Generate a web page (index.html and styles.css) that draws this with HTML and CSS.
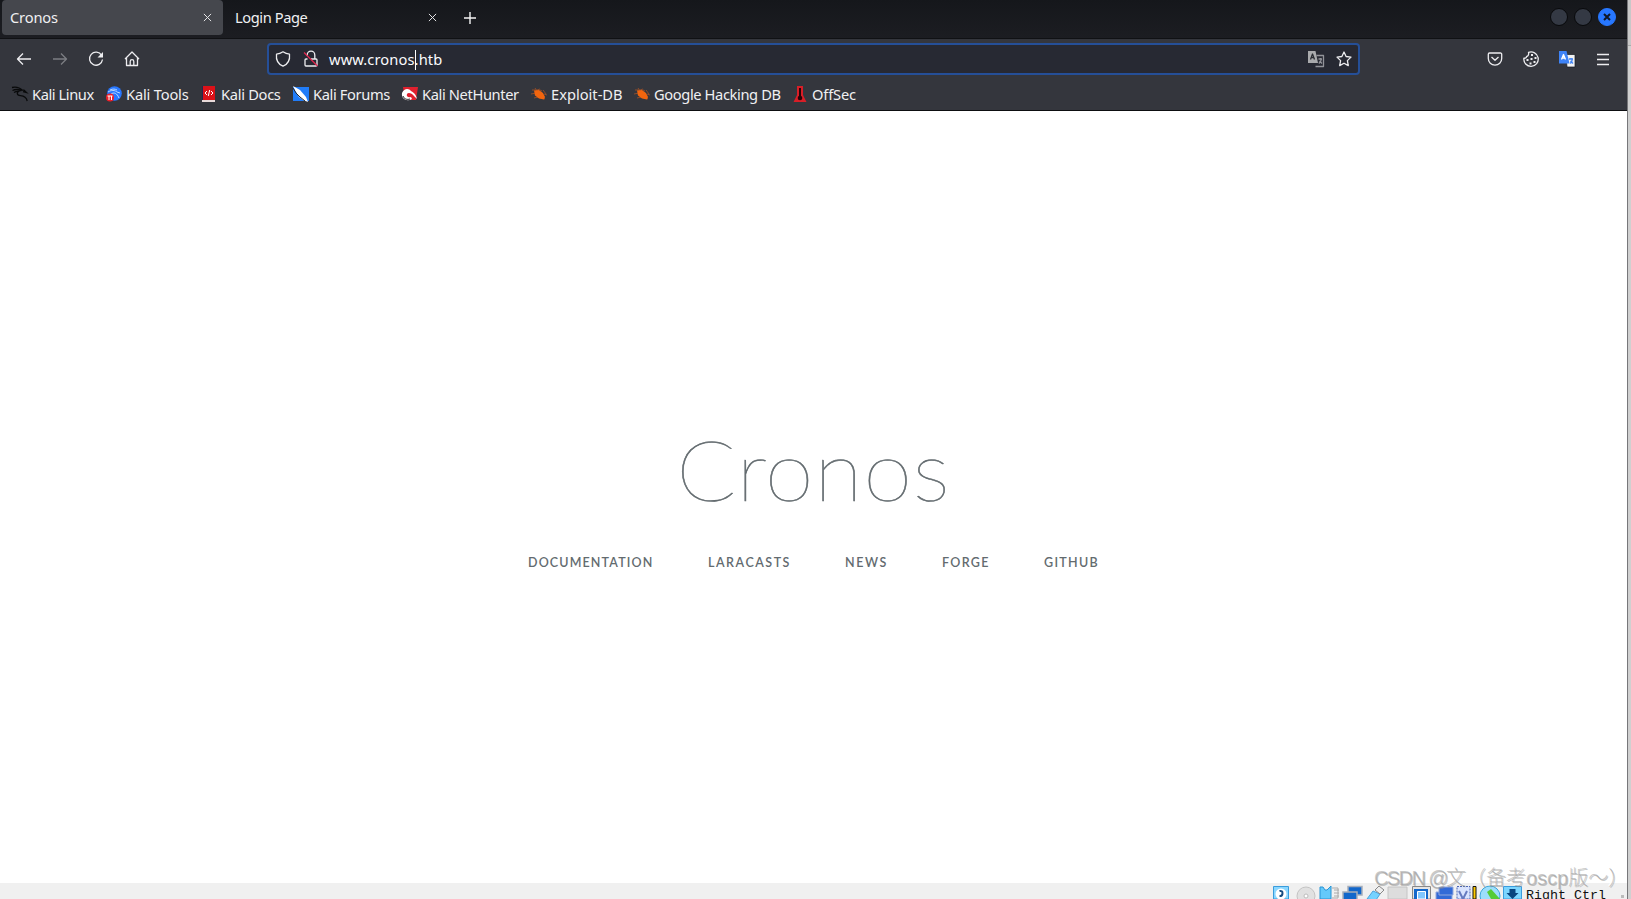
FILE: index.html
```html
<!DOCTYPE html>
<html lang="en">
<head>
<meta charset="utf-8">
<title>Cronos</title>
<link rel="stylesheet" href="styles.css">
</head>
<body>
<div class="screen">
  <div class="browser">
    <header class="tabs">
      <div class="tab active"><span>Cronos</span><svg class="x" viewBox="0 0 10 10"><path d="M1 1l8 8M9 1l-8 8"/></svg></div>
      <div class="tab second"><span>Login Page</span><svg class="x" viewBox="0 0 10 10"><path d="M1 1l8 8M9 1l-8 8"/></svg></div>
      <svg class="plus" viewBox="0 0 12 12"><path d="M6 0v12M0 6h12"/></svg>
      <div class="controls"><i></i><i></i><i class="close"><svg viewBox="0 0 8 8"><path d="M1 1l6 6M7 1l-6 6"/></svg></i></div>
    </header>
    <div class="toolbar">
      <div class="navs">
        <svg class="ic" viewBox="0 0 16 16"><path d="M15 8H1.5M7 2.5L1.5 8 7 13.500"/></svg>
        <svg class="ic dim" viewBox="0 0 16 16"><path d="M1 8h13.500M9 2.500L14.500 8 9 13.500"/></svg>
        <svg class="ic" viewBox="0 0 16 16"><path d="M13.600 4.300A6.500 6.500 0 1 0 14.500 8.500"/><path class="solid" d="M15 1v5.500H9.500z"/></svg>
        <svg class="ic" viewBox="0 0 16 16"><path d="M1 8l7-7 7 7M2.500 7v7.500h11V7M6.200 14.500v-4a1.800 1.800 0 0 1 3.600 0v4"/></svg>
      </div>
      <div class="url">
        <svg class="ic" viewBox="0 0 16 16"><path d="M8 .8C6.300 2 4 3 1.500 3.200c-.6 5.300 1.200 9.700 6.500 12 5.300-2.300 7.100-6.700 6.500-12C12 3 9.700 2 8 .8z"/></svg>
        <svg class="ic lock" viewBox="0 0 16 16"><path d="M4.200 5V4a3.800 3.800 0 0 1 7.600 0v3.500M4.500 8H3a1 1 0 0 0-1 1v5a1 1 0 0 0 1 1h10a1 1 0 0 0 1-1V9a1 1 0 0 0-1-1H8"/><path class="slash" d="M1 1.500l13.500 13.500"/></svg>
        <span class="address">www.cronos<b class="caret"></b>.htb</span>
        <svg class="ic tr" viewBox="0 0 16 16"><path class="page" d="M8.500 4.500h7v11H7.500"/><path class="card" d="M0 0h7.500L10 12H0z"/><path class="glyph" d="M2.500 8.500L4.500 3l2 5.500M3.200 6.600h2.700"/><path class="page" d="M10.500 8h3.500M12.500 7v1M13.300 8c0 2-1.300 3.500-2.500 4.500M11.500 10l2.500 2.500"/></svg>
        <svg class="ic star" viewBox="0 0 16 16"><path d="M8 1l2.100 4.500 4.900.6-3.600 3.500.9 5L8 12.200l-4.300 2.400.9-5L1 6.100l4.900-.6z"/></svg>
      </div>
      <div class="tools">
        <svg class="ic" viewBox="0 0 16 16"><path d="M2.500 2h11a1.200 1.200 0 0 1 1.200 1.200V7.500a6.700 6.700 0 0 1-13.400 0V3.200A1.200 1.200 0 0 1 2.500 2zM4.500 6L8 9.300 11.500 6"/></svg>
        <svg class="ic" viewBox="0 0 16 16"><path d="M5.500 1.400A7.200 7.200 0 1 1 .9 7.200c1.300.3 2.500-.4 2.800-1.700C5.300 5.200 6 3.300 5.500 1.400z"/><path class="solid" d="M8 3h2v2H8zM11.500 6h2v2h-2zM7.500 7h2v2h-2zM3.500 8h2v2h-2zM10.500 10h2v2h-2zM6.500 11.500h2v2h-2z"/></svg>
        <svg class="ic tr blue" viewBox="0 0 16 16"><path class="paper" d="M7 3.500h9V16H8z"/><path class="card" d="M0 0h7.500l3 12.500H0z"/><path class="glyph" d="M2.500 8.500L4.500 3.500l2 5M3.200 7h2.700"/><path class="page" d="M10 8h4M12 7v1M13.300 8c0 2-1 3.500-2 4.500M11.500 10l2.500 2.500"/></svg>
        <svg class="ic" viewBox="0 0 16 16"><path d="M2 3.500h12M2 8.500h12M2 13.500h12"/></svg>
      </div>
    </div>
    <nav class="bookmarks">
      <a class="b1"><svg viewBox="0 0 16 16"><path class="dragon" d="M0 1.500c4-.8 8 .3 10.500 3M.5 4.500c3-1.500 6-1.300 9 .2M2 6.500c1.500-1 3-1.300 4.500-1.200M9 4l3 .2 2.500 2.300-3.500-.8M8.500 4.500C4 6 4.500 9.500 8.500 9.700c4 .3 6 1.800 6.700 5.300"/></svg><span>Kali Linux</span></a>
      <a class="b2"><svg viewBox="0 0 16 16"><circle cx="8.500" cy="7.500" r="7.300" fill="#2777ff"/><path d="M2 6c3-2 7-2 9 0l3 1M5 8c3-2 6-1 8 4M4 4c3-1.500 5-1 7 0" stroke="#b9d8ff" fill="none"/><circle cx="4" cy="11.500" r="4" fill="#ed2028"/><path d="M1.500 10h5M3 10v4M5.500 10v4" stroke="#fff" fill="none"/></svg><span>Kali Tools</span></a>
      <a class="b3"><svg viewBox="0 0 16 16"><path d="M1 0h2v14H1z" fill="#2a2450"/><path d="M2 0h12v14H2z" fill="#dc1118"/><path d="M1 14h13v2H1z" fill="#e8dada"/><path d="M6 5L4 7l2 2M10 5l2 2-2 2M8.700 4L7.300 10" stroke="#fff" fill="none"/></svg><span>Kali Docs</span></a>
      <a class="b4"><svg viewBox="0 0 16 16"><path d="M0 1h16v14H0z" fill="#207cf8"/><path d="M0 0l7 4 6 7 2 5-5-2-4-3-3-5z" fill="#fff"/><path d="M0 2l3 5 4 4 5 4" stroke="#26272b" stroke-width="1" fill="none"/></svg><span>Kali Forums</span></a>
      <a class="b5"><svg viewBox="0 0 16 16"><path d="M1 1h15l-2 13H3z" fill="#e0202e"/><path d="M0 7c2-5 7-5 9-2 2 1 5 3 6 8l-3-3c-2-3-6-4-7-2s1 4 4 3l1 2c-5 3-11 0-10-6z" fill="#fff"/><path d="M1 10c1 3 4 4 7 3" stroke="#222" fill="none"/></svg><span>Kali NetHunter</span></a>
      <a class="b6"><svg viewBox="0 0 16 16"><path d="M1 4l5 0 3-1M0 8l5-1M3 12l4-1M9 4l2 1M13 8l3 1M12 12l2 1M4 2l2 3M12 4l3 4" stroke="#8e4c2b" fill="none"/><path d="M3 4.500l5-.5 4 3 2 4-1 2.500-5-1-4-3z" fill="#f2650e"/></svg><span>Exploit-DB</span></a>
      <a class="b7"><svg viewBox="0 0 16 16"><path d="M1 4l5 0 3-1M0 8l5-1M3 12l4-1M9 4l2 1M13 8l3 1M12 12l2 1M4 2l2 3M12 4l3 4" stroke="#8e4c2b" fill="none"/><path d="M3 4.500l5-.5 4 3 2 4-1 2.500-5-1-4-3z" fill="#f2650e"/></svg><span>Google Hacking DB</span></a>
      <a class="b8"><svg viewBox="0 0 16 16"><path d="M5 0h6v9l3.500 7h-13L5 9z" fill="#d81e27"/><path d="M8 2v8" stroke="#260609" stroke-width="2"/><circle cx="8" cy="12" r="2.300" fill="#260609"/></svg><span>OffSec</span></a>
    </nav>
    <main class="page-body">
      <h1>Cronos</h1>
      <div class="links"><a class="l1">Documentation</a><a class="l2">Laracasts</a><a class="l3">News</a><a class="l4">Forge</a><a class="l5">GitHub</a></div>
    </main>
    <footer class="status">
      <svg class="devices" viewBox="0 0 250 16">
        <g><path d="M1.500 3.500h15V16h-15z" fill="#8bd7ff" stroke="#3b9ddd"/><circle cx="9" cy="11" r="5.500" fill="#fff"/><path d="M7.500 8c4-1 4 5 0 5" stroke="#174c80" fill="none" stroke-width="2"/></g>
        <g><circle cx="34" cy="13" r="9" fill="#e1e1e1" stroke="#c4c4c4"/><circle cx="34" cy="13" r="2" fill="#fff" stroke="#bbb"/></g>
        <g><path d="M60 5h6v10h-6M62 7h5M62 10h5M62 13h5" stroke="#aaa" fill="none" stroke-width="1"/><path d="M48 4h3l2 3h2l4-4v13H48z" fill="#64c9fa" stroke="#2994d5"/></g>
        <g stroke="#a6aebb" stroke-width="1.500"><path d="M76 3.500h14V12H76z" fill="#1267cb"/><path d="M71 9h14v8H71z" fill="#1267cb"/></g>
        <g><path d="M95 16l6-8 7 3-4 6z" fill="#75d2ff" stroke="#4aa2dd"/><path d="M103 7l4-4 5 4-4 4z" fill="#eee" stroke="#888"/></g>
        <path d="M116 4h19v12h-19z" fill="#ddd" stroke="#c4c4c4"/>
        <g><path d="M140.500 3.500h18V16h-18z" fill="#e4e4e4" stroke="#888"/><path d="M142 6h14v10h-14z" fill="#1267cb"/><path d="M145.500 8.500h8V16h-8z" fill="#80c6ff" stroke="#fff"/></g>
        <g fill="#326ad7" stroke="#91a8de"><path d="M164 9h16v8h-16z"/><path d="M167 4h14v8h-14z"/></g>
        <g><path d="M185 3.500h13V16h-13z" fill="#d9e4ff" stroke="#4b65b4" stroke-dasharray="2 1"/><path d="M187 8l4 8 4-8" fill="none" stroke="#657ac0" stroke-width="2"/><path d="M201 3.500h3V16h-3z" fill="#ffcb00" stroke="#111"/></g>
        <g><circle cx="218" cy="13" r="10" fill="#9cdefc" stroke="#3aa6de"/><path d="M215 9l4-3 9 10h-9z" fill="#55cc35"/></g>
        <g><path d="M231.500 3.500h18V16h-18z" fill="#7cd5ff" stroke="#3b9ddd"/><path d="M237.500 6h6v4h3l-6 6-6-6h3z" fill="#07447f"/></g>
      </svg>
      <span class="host">Right Ctrl</span><i class="grip"></i>
    </footer>
  </div>
  <aside class="edge"></aside>
  <div class="watermark"><span class="w1">CSDN @</span><span class="w2" lang="zh-CN">文（备考oscp版～）</span></div>
</div>
</body>
</html>
```
FILE: styles.css
```css
* { box-sizing: border-box; }
body { margin: 0; font: 14.67px/20px "Noto Sans", sans-serif; color: #f0f0f2; background: #fff; }
svg { display: block; flex: none; fill: none; overflow: visible; }
.screen { position: relative; display: flex; width: 1631px; height: 899px; overflow: hidden; }
.browser { width: 1627px; display: flex; flex-direction: column; }
.edge { width: 4px; border-left: 1px solid #77777a; background: linear-gradient(#c8c8c8 45px, #aaa 45px 46px, #d0d0d0 46px); }
.tabs { height: 39px; display: flex; background: linear-gradient(#15171b, #1c1d22); border-bottom: 1px solid #101114; padding-left: 2px; }
.tab { width: 221px; height: 35px; padding: 0 11px 1px 8px; display: flex; align-items: center; justify-content: space-between; border-radius: 4px; margin-right: 4px; letter-spacing: -.150px; }
.tab.active { background: #45474d; }
.second { letter-spacing: -.420px; }
.x { width: 9px; height: 9px; stroke: #e6e6e8; stroke-width: 1.100; }
.plus { width: 12px; height: 12px; margin: 12px 0 0 12px; stroke: #f4f4f4; stroke-width: 1.400; }
.controls { display: flex; gap: 6px; margin: 8px 11px 0 auto; }
.controls i { width: 18px; height: 18px; border-radius: 50%; background: #343944; border: 1px solid #08090b; }
.controls .close { background: #2777ff; border-color: #2777ff; padding: 4px; }
.close svg { width: 8px; stroke: #101725; stroke-width: 2; }
.toolbar { height: 40px; display: flex; align-items: center; background: #34363d; }
.ic { width: 16px; height: 16px; stroke: #ededf0; stroke-width: 1.300; stroke-linejoin: round; }
.ic.dim { stroke: #7b7d82; }
.solid { fill: #ededf0; stroke: none; }
.navs { display: flex; width: 267px; padding-left: 16px; gap: 20px; }
.url { width: 1093px; height: 32px; border: 2px solid #254f98; border-radius: 4px; background: #272933; display: flex; align-items: center; padding: 0 6px; }
.lock { margin: 0 10px 0 12px; }
.slash { stroke: #e22850; }
.address { color: #fbfbfe; flex: 1; padding-top: 1px; letter-spacing: .110px; }
.caret { display: inline-block; width: 1px; height: 20px; margin: -2px -1px 0 0; vertical-align: middle; background: #fff; }
.star { margin-left: 12px; }
.tr .page { stroke: #929399; }
.tr .card { fill: #a9aaad; stroke: none; }
.tr .glyph { stroke: #292b32; }
.blue .card { fill: #3e83f7; }
.blue .glyph { stroke: #fff; }
.blue .paper { fill: #f2f2f2; stroke: #151820; stroke-width: .7; }
.blue .page { stroke: #3e83f7; }
.tools { display: flex; gap: 20px; margin-left: 127px; }
.bookmarks { height: 32px; padding: 0 0 1px 12px; display: flex; background: #34363d; border-bottom: 1px solid #0d0e11; }
.bookmarks a { display: flex; gap: 4px; align-items: center; white-space: nowrap; }
.bookmarks svg { width: 16px; height: 16px; }
.dragon { stroke: #090a0b; stroke-width: 1.300; }
.b1 { width: 94px; letter-spacing: -.420px; }
.b2 { width: 95px; letter-spacing: -.180px; }
.b3 { width: 92px; letter-spacing: -.300px; }
.b4 { width: 109px; letter-spacing: -.370px; }
.b5 { width: 129px; letter-spacing: -.370px; }
.b6 { width: 103px; }
.b7 { width: 158px; letter-spacing: -.380px; }
.b8 { letter-spacing: -.150px; }
.page-body { height: 772px; padding-top: 308px; color: #636b6f; background: #fff; }
h1 { margin: 0; text-align: center; font: 100 84px/99px Lato, sans-serif; letter-spacing: 1px; transform: scaleX(1.047); -webkit-text-stroke: .6px #636b6f; }
.links { display: flex; margin: 35px 0 0 528px; font: 600 12.500px/20px Lato, sans-serif; letter-spacing: 1.600px; text-transform: uppercase; }
.l1 { width: 180px; letter-spacing: 1.140px; }
.l2 { width: 137px; letter-spacing: 1.520px; }
.l3 { width: 97px; }
.l4 { width: 102px; letter-spacing: 1.300px; }
.l5 { letter-spacing: 1.300px; }
.status { height: 16px; overflow: hidden; background: #f0f0f0; display: flex; padding-left: 1272px; color: #111; }
.devices { width: 250px; height: 16px; }
.host { font: 13.330px/14px "Liberation Mono", monospace; margin: 6px 0 0 4px; white-space: nowrap; }
.grip { width: 3px; height: 3px; margin: 12px 0 0 15px; background: #bbb; }
.watermark { position: absolute; left: 1374px; top: 864px; display: flex; font: 300 20px/28px "Liberation Sans", "Noto Sans CJK SC", sans-serif; color: #9998; text-shadow: 1px 1px #8887, -1px -1px #fff; white-space: nowrap; }
.w1 { width: 72px; letter-spacing: -1.600px; }
.w2 { text-spacing-trim: space-all; }
```
